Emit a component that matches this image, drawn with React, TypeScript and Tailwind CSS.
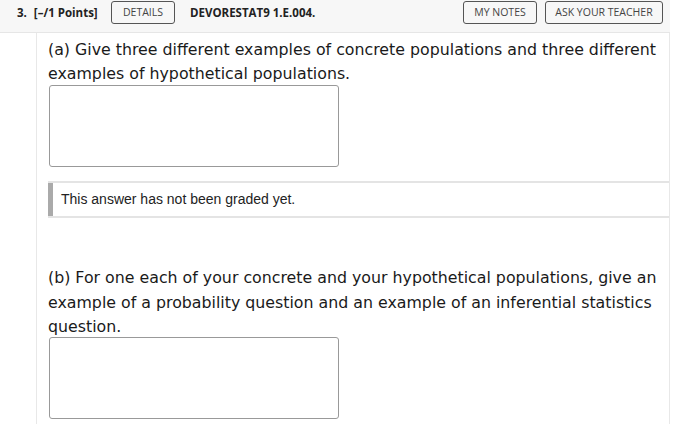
export default function App() {
  const os = { fontFamily: '"Open Sans", "Liberation Sans", sans-serif' };
  const vd = { fontFamily: '"DejaVu Sans", Verdana, sans-serif' };
  return (
    <div className="w-[675px] h-[424px] bg-white overflow-hidden relative">
      <div className="w-[670px] h-[33px] bg-[#f7f7f7] border-b border-[#e6e6e6] flex items-start" style={os}>
        <div className="pl-[17px] pt-[5px] w-[111px] text-[11.5px] font-bold text-[#222] leading-[16px] flex">
          <span>3.</span>
          <span className="ml-[7px]">[–/1 Points]</span>
        </div>
        <div className="mt-[1px] w-[64px] h-[23px] border border-[#555] rounded-[3px] flex items-center justify-center text-[10.5px] text-[#444] bg-[#f7f7f7]">DETAILS</div>
        <div className="pl-[15px] pt-[5px] text-[11.5px] font-bold text-[#222] leading-[16px]">DEVORESTAT9 1.E.004.</div>
        <div className="flex-1" />
        <div className="mt-[1px] w-[74px] h-[23px] border border-[#555] rounded-[3px] flex items-center justify-center text-[10.5px] text-[#444]">MY NOTES</div>
        <div className="ml-[8px] mt-[1px] w-[118px] h-[23px] border border-[#555] rounded-[3px] flex items-center justify-center text-[10.5px] text-[#444]">ASK YOUR TEACHER</div>
        <div className="w-[7px]" />
      </div>
      <div className="ml-[36px] w-[634px] h-[400px] border-l border-r border-[#e8e8e8] pl-[11px]">
        <div className="pt-[5px] text-[15.8px] leading-[24px] text-[#1a1a1a] pr-[6px]" style={vd}>
          (a) Give three different examples of concrete populations and three different examples of hypothetical populations.
        </div>
        <div className="ml-[1px] mt-[-1px] w-[290px] h-[82px] border border-[#999] rounded-[3px]" />
        <div className="mt-[14px] h-[37px] border-t-2 border-b-2 border-[#e4e4e4] flex items-center">
          <div className="w-[5px] h-full bg-[#aaa]" />
          <div className="pl-[8px] text-[14px] text-[#222]" style={{ fontFamily: '"Liberation Sans", Arial, sans-serif' }}>This answer has not been graded yet.</div>
        </div>
        <div className="pt-[48px] text-[15.8px] leading-[24.5px] text-[#1a1a1a] pr-[6px]" style={vd}>
          (b) For one each of your concrete and your hypothetical populations, give an example of a probability question and an example of an inferential statistics question.
        </div>
        <div className="ml-[1px] mt-[-3px] w-[290px] h-[82px] border border-[#999] rounded-[3px]" />
      </div>
    </div>
  );
}
